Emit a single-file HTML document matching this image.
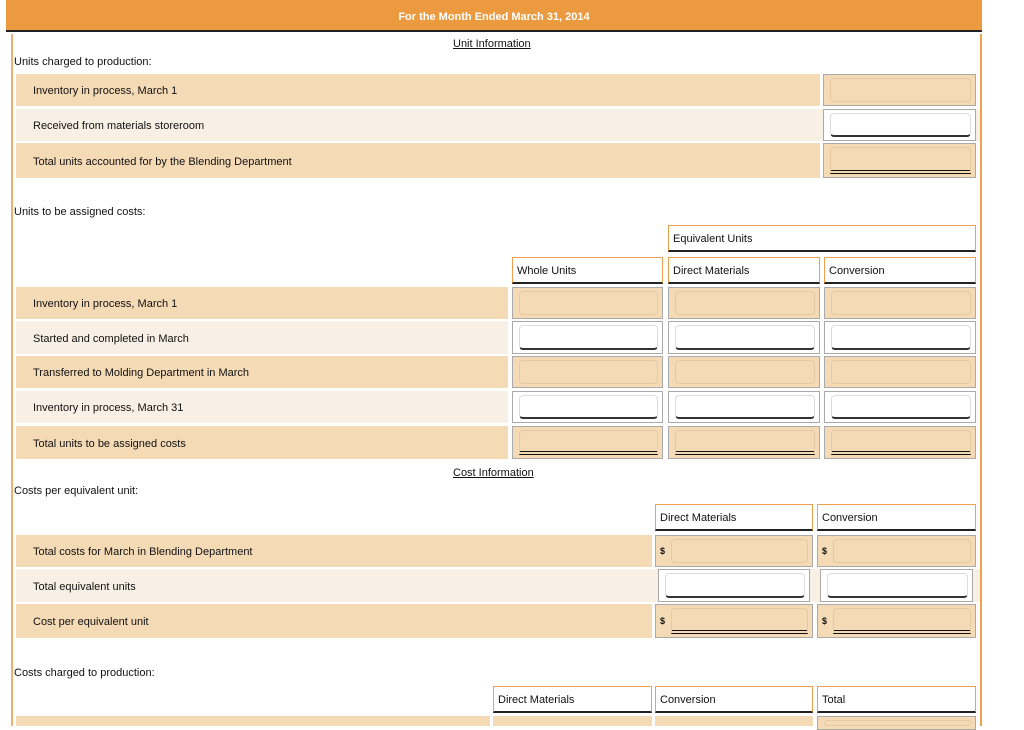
<!DOCTYPE html>
<html><head><meta charset="utf-8"><style>
*{box-sizing:border-box;margin:0;padding:0}
body{width:1024px;height:726px;background:#fff;position:relative;overflow:hidden;font-family:"Liberation Sans",sans-serif;font-size:11px;color:#111}
.a{position:absolute}
.hdr{left:6px;top:0;width:976px;height:32px;background:#ec9a40;color:#fff;font-weight:bold;font-size:11px;text-align:center;line-height:34px;border-bottom:2px solid #222}
.lb{left:11px;top:34px;width:2px;height:692px;background:#f0b070}
.rb{left:980px;top:34px;width:2px;height:692px;background:#f0a050}
.b{background:#f5dab6}
.l{background:#f8f0e4}
.lab{padding-left:17px;padding-top:2px;display:flex;align-items:center}
.cell{border:1px solid #aaa;padding:3px 4px 3px 6px;display:flex;align-items:center}
.in{flex:1;align-self:stretch;border:1px solid #ddd;border-radius:4px}
.cell.b .in{border-color:#e5c9a5}
.cell.w{background:#fff}
.cell.w .in{background:#fff;border-bottom:2px solid #333}
.cell .in.dbl{border-bottom:4px double #111;border-radius:4px 4px 0 0}
.th{border:1px solid #f0a050;border-bottom:2px solid #222;background:#fff;padding-left:4px;padding-top:2px;display:flex;align-items:center}
.d{font-size:9px;font-weight:bold;margin-right:6px}
.t{padding-top:1px}
</style></head><body>
<div class="a hdr">For the Month Ended March 31, 2014</div>
<div class="a lb"></div><div class="a rb"></div>
<div class="a" style="left:453px;top:38px;text-decoration:underline">Unit Information</div>
<div class="a" style="left:14px;top:56px">Units charged to production:</div>

<div class="a b lab" style="left:16px;top:74px;width:804px;height:32px">Inventory in process, March 1</div>
<div class="a cell b" style="left:823px;top:74px;width:153px;height:32px"><div class="in"></div></div>
<div class="a l lab" style="left:16px;top:109px;width:804px;height:32px">Received from materials storeroom</div>
<div class="a l" style="left:820px;top:109px;width:160px;height:32px"></div>
<div class="a cell w" style="left:823px;top:109px;width:153px;height:32px"><div class="in"></div></div>
<div class="a b lab" style="left:16px;top:143px;width:804px;height:35px">Total units accounted for by the Blending Department</div>
<div class="a cell b" style="left:823px;top:143px;width:153px;height:35px"><div class="in dbl"></div></div>

<div class="a" style="left:14px;top:206px">Units to be assigned costs:</div>
<div class="a th" style="left:668px;top:225px;width:308px;height:27px">Equivalent Units</div>
<div class="a th" style="left:512px;top:257px;width:151px;height:27px">Whole Units</div>
<div class="a th" style="left:668px;top:257px;width:152px;height:27px">Direct Materials</div>
<div class="a th" style="left:824px;top:257px;width:152px;height:27px">Conversion</div>

<div class="a b lab" style="left:16px;top:287px;width:492px;height:32px">Inventory in process, March 1</div>
<div class="a cell b" style="left:512px;top:287px;width:151px;height:32px"><div class="in"></div></div>
<div class="a cell b" style="left:668px;top:287px;width:152px;height:32px"><div class="in"></div></div>
<div class="a cell b" style="left:824px;top:287px;width:152px;height:32px"><div class="in"></div></div>

<div class="a l lab" style="left:16px;top:321px;width:492px;height:33px">Started and completed in March</div>
<div class="a cell w" style="left:512px;top:321px;width:151px;height:33px"><div class="in"></div></div>
<div class="a cell w" style="left:668px;top:321px;width:152px;height:33px"><div class="in"></div></div>
<div class="a cell w" style="left:824px;top:321px;width:152px;height:33px"><div class="in"></div></div>

<div class="a b lab" style="left:16px;top:356px;width:492px;height:32px">Transferred to Molding Department in March</div>
<div class="a cell b" style="left:512px;top:356px;width:151px;height:32px"><div class="in"></div></div>
<div class="a cell b" style="left:668px;top:356px;width:152px;height:32px"><div class="in"></div></div>
<div class="a cell b" style="left:824px;top:356px;width:152px;height:32px"><div class="in"></div></div>

<div class="a l lab" style="left:16px;top:391px;width:492px;height:32px">Inventory in process, March 31</div>
<div class="a cell w" style="left:512px;top:391px;width:151px;height:32px"><div class="in"></div></div>
<div class="a cell w" style="left:668px;top:391px;width:152px;height:32px"><div class="in"></div></div>
<div class="a cell w" style="left:824px;top:391px;width:152px;height:32px"><div class="in"></div></div>

<div class="a b lab" style="left:16px;top:426px;width:492px;height:33px">Total units to be assigned costs</div>
<div class="a cell b" style="left:512px;top:426px;width:151px;height:33px"><div class="in dbl"></div></div>
<div class="a cell b" style="left:668px;top:426px;width:152px;height:33px"><div class="in dbl"></div></div>
<div class="a cell b" style="left:824px;top:426px;width:152px;height:33px"><div class="in dbl"></div></div>

<div class="a" style="left:453px;top:467px;text-decoration:underline">Cost Information</div>
<div class="a" style="left:14px;top:485px">Costs per equivalent unit:</div>
<div class="a th" style="left:655px;top:504px;width:158px;height:27px">Direct Materials</div>
<div class="a th" style="left:817px;top:504px;width:159px;height:27px">Conversion</div>

<div class="a b lab" style="left:16px;top:535px;width:636px;height:32px">Total costs for March in Blending Department</div>
<div class="a cell b" style="left:655px;top:535px;width:158px;height:32px;padding-left:4px"><span class="d">$</span><div class="in"></div></div>
<div class="a cell b" style="left:817px;top:535px;width:159px;height:32px;padding-left:4px"><span class="d">$</span><div class="in"></div></div>

<div class="a l lab" style="left:16px;top:569px;width:636px;height:33px">Total equivalent units</div>
<div class="a l" style="left:652px;top:569px;width:328px;height:33px"></div>
<div class="a cell w" style="left:658px;top:569px;width:152px;height:33px"><div class="in"></div></div>
<div class="a cell w" style="left:820px;top:569px;width:153px;height:33px"><div class="in"></div></div>

<div class="a b lab" style="left:16px;top:604px;width:636px;height:34px">Cost per equivalent unit</div>
<div class="a cell b" style="left:655px;top:604px;width:158px;height:34px;padding-left:4px"><span class="d">$</span><div class="in dbl"></div></div>
<div class="a cell b" style="left:817px;top:604px;width:159px;height:34px;padding-left:4px"><span class="d">$</span><div class="in dbl"></div></div>

<div class="a" style="left:14px;top:667px">Costs charged to production:</div>
<div class="a th" style="left:493px;top:686px;width:159px;height:27px">Direct Materials</div>
<div class="a th" style="left:655px;top:686px;width:158px;height:27px">Conversion</div>
<div class="a th" style="left:817px;top:686px;width:159px;height:27px">Total</div>
<div class="a b" style="left:16px;top:716px;width:474px;height:10px"></div>
<div class="a b" style="left:493px;top:716px;width:159px;height:10px"></div>
<div class="a b" style="left:655px;top:716px;width:158px;height:10px"></div>
<div class="a cell b" style="left:817px;top:716px;width:159px;height:14px"><div class="in"></div></div>
</body></html>
